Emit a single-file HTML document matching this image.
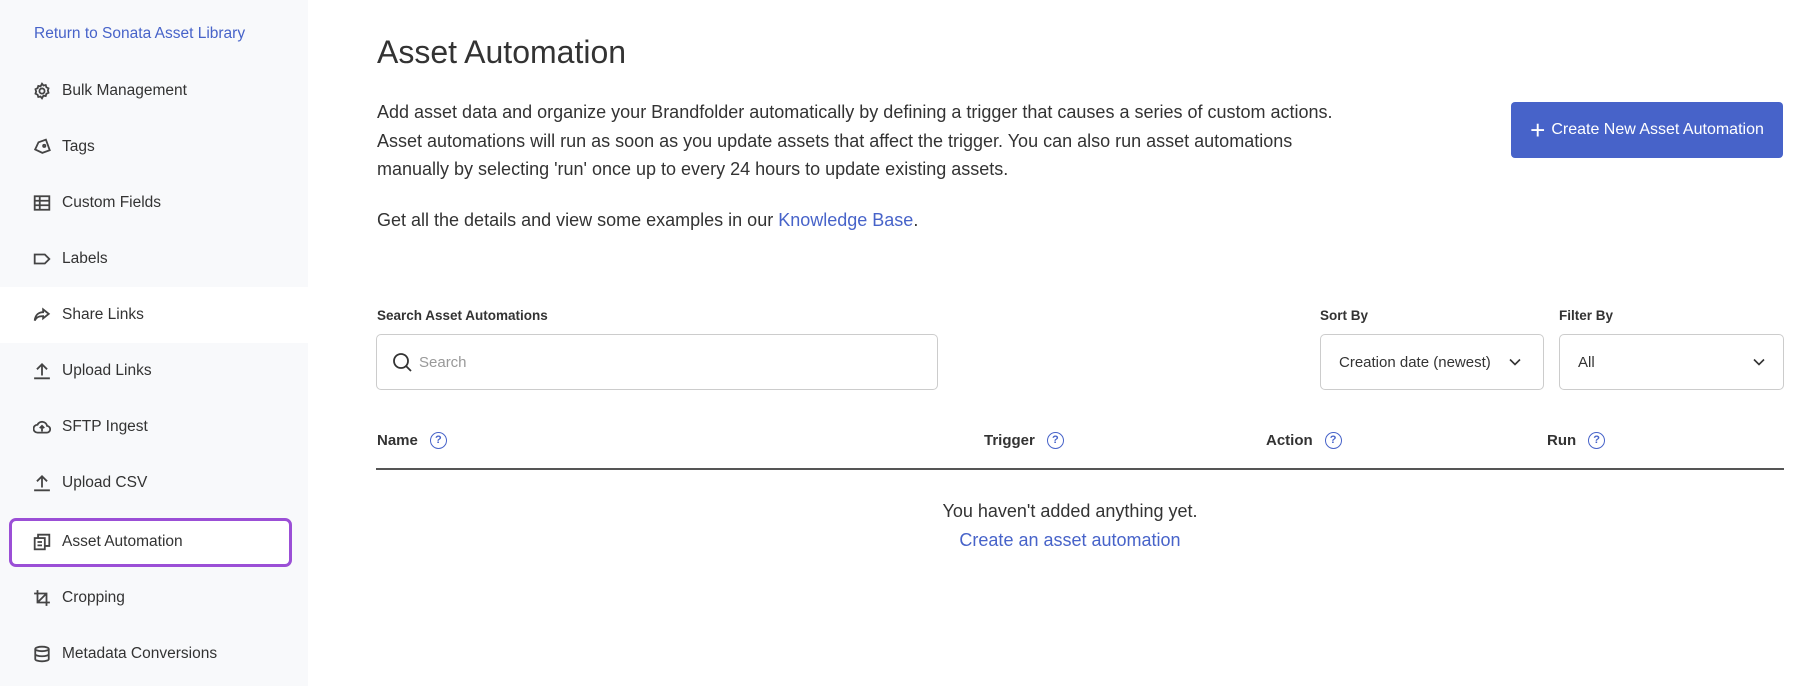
<!DOCTYPE html>
<html><head><meta charset="utf-8"><style>
*{box-sizing:border-box;margin:0;padding:0}
body{width:1816px;height:686px;overflow:hidden;background:#fff;font-family:"Liberation Sans",sans-serif;color:#333;position:relative}
.side{position:absolute;left:0;top:0;width:308px;height:686px;background:#f8f9fb}
.ret{position:absolute;left:34px;top:25px;font-size:15.5px;color:#4763c9}
.item{position:absolute;left:0;width:308px;height:56px;display:flex;align-items:center;padding-left:33px;font-size:15.5px;color:#333}
.item svg{width:18px;height:18px;margin-right:11px;stroke:#444;fill:none;stroke-width:1.6}
.white{background:#fff}
.hl{position:absolute;left:9px;top:518px;width:283px;height:49px;border:3px solid #9b4fd6;border-radius:7px;background:#fff}
.abs{position:absolute}
h1{position:absolute;left:377px;top:34px;font-size:32px;font-weight:normal;color:#333}
.p{position:absolute;left:377px;font-size:18px;color:#333;line-height:28.5px}
.btn{position:absolute;left:1511px;top:102px;width:272px;height:56px;background:#4763c9;border-radius:4px;color:#fff;font-size:16px;display:flex;align-items:center;justify-content:center}
.lbl{position:absolute;font-size:13.5px;font-weight:bold;color:#333}
.box{position:absolute;border:1px solid #ccc;border-radius:5px;height:56px;display:flex;align-items:center;font-size:15px;color:#333}
.th{position:absolute;top:432px;font-size:15px;font-weight:bold;color:#333;display:flex;align-items:center}
.q{display:inline-block;width:17px;height:17px;border:1.6px solid #4763c9;border-radius:50%;color:#4763c9;font-size:11px;font-weight:bold;text-align:center;line-height:14px;margin-left:12px}
</style></head><body>
<div class="side">
<div class="ret">Return to Sonata Asset Library</div>
<div class="item" style="top:63px"><svg viewBox="0 0 16 16"><circle cx="8" cy="8" r="2.3"/><path d="M8 1.5l1.3 1.6 2-.4.6 2 1.9.9-.6 2 .6 2-1.9.9-.6 2-2-.4L8 14.5l-1.3-1.6-2 .4-.6-2-1.9-.9.6-2-.6-2 1.9-.9.6-2 2 .4z"/></svg>Bulk Management</div>
<div class="item" style="top:119px"><svg viewBox="0 0 16 16"><path d="M1.5 8l5-5h7v10h-7z" transform="rotate(-20 8 8)"/><circle cx="10" cy="7" r="1"/></svg>Tags</div>
<div class="item" style="top:175px"><svg viewBox="0 0 16 16"><rect x="1.5" y="2" width="13" height="12"/><path d="M1.5 6h13M1.5 10h13M6 2v12"/></svg>Custom Fields</div>
<div class="item" style="top:231px"><svg viewBox="0 0 16 16"><path d="M1.5 4h9l4 4-4 4h-9z"/></svg>Labels</div>
<div class="item white" style="top:287px"><svg viewBox="0 0 16 16"><path d="M9 3l5 4-5 4V9C5 9 3 10 1.5 13 2 8 5 5.5 9 5.5z"/></svg>Share Links</div>
<div class="item" style="top:343px"><svg viewBox="0 0 16 16"><path d="M8 12V2M3.5 6.5L8 2l4.5 4.5M1 14.5h14"/></svg>Upload Links</div>
<div class="item" style="top:399px"><svg viewBox="0 0 16 16"><path d="M4 13a3.5 3.5 0 010-7 4.5 4.5 0 018.5 1A3 3 0 0112 13zM8 12V7M6 9l2-2 2 2"/></svg>SFTP Ingest</div>
<div class="item" style="top:455px"><svg viewBox="0 0 16 16"><path d="M8 12V2M3.5 6.5L8 2l4.5 4.5M1 14.5h14"/></svg>Upload CSV</div>
<div class="hl"></div>
<div class="item" style="top:514px;background:none"><svg viewBox="0 0 16 16"><rect x="1.5" y="4.5" width="9" height="10"/><path d="M4.5 4.5V1.5h10v10h-4M4 8h4M4 11h4"/></svg>Asset Automation</div>
<div class="item" style="top:570px"><svg viewBox="0 0 16 16"><path d="M4 1v11h11M1 4h11v11M4 12l8-8"/></svg>Cropping</div>
<div class="item" style="top:626px"><svg viewBox="0 0 16 16"><ellipse cx="8" cy="3.5" rx="6" ry="2"/><path d="M2 3.5v9c0 1.1 2.7 2 6 2s6-.9 6-2v-9M2 8c0 1.1 2.7 2 6 2s6-.9 6-2"/></svg>Metadata Conversions</div>
</div>
<h1>Asset Automation</h1>
<div class="p" style="top:98px">Add asset data and organize your Brandfolder automatically by defining a trigger that causes a series of custom actions.<br>Asset automations will run as soon as you update assets that affect the trigger. You can also run asset automations<br>manually by selecting 'run' once up to every 24 hours to update existing assets.</div>
<div class="p" style="top:206px">Get all the details and view some examples in our <span style="color:#4763c9">Knowledge Base</span>.</div>
<div class="btn"><span style="font-size:26px;margin-right:6px;font-weight:300;line-height:1">+</span>Create New Asset Automation</div>
<div class="lbl" style="left:377px;top:308px">Search Asset Automations</div>
<div class="lbl" style="left:1320px;top:308px">Sort By</div>
<div class="lbl" style="left:1559px;top:308px">Filter By</div>
<div class="box" style="left:376px;top:334px;width:562px;padding-left:14px;color:#999"><svg width="22" height="22" viewBox="0 0 22 22" style="margin-right:6px"><circle cx="10" cy="10" r="7" stroke="#333" stroke-width="1.8" fill="none"/><path d="M15 15l5 5" stroke="#333" stroke-width="1.8"/></svg>Search</div>
<div class="box" style="left:1320px;top:334px;width:224px;padding-left:18px">Creation date (newest)<svg width="12" height="8" viewBox="0 0 12 8" style="margin-left:18px"><path d="M1 1.5l5 5 5-5" stroke="#333" stroke-width="1.6" fill="none"/></svg></div>
<div class="box" style="left:1559px;top:334px;width:225px;padding-left:18px">All<svg width="12" height="8" viewBox="0 0 12 8" style="position:absolute;right:18px"><path d="M1 1.5l5 5 5-5" stroke="#333" stroke-width="1.6" fill="none"/></svg></div>
<div class="th" style="left:377px">Name<span class="q">?</span></div>
<div class="th" style="left:984px">Trigger<span class="q">?</span></div>
<div class="th" style="left:1266px">Action<span class="q">?</span></div>
<div class="th" style="left:1547px">Run<span class="q">?</span></div>
<div class="abs" style="left:376px;top:468px;width:1408px;height:1.5px;background:#555"></div>
<div class="abs" style="left:366px;top:501px;width:1408px;text-align:center;font-size:18px">You haven't added anything yet.</div>
<div class="abs" style="left:366px;top:530px;width:1408px;text-align:center;font-size:18px;color:#4763c9">Create an asset automation</div>
</body></html>
